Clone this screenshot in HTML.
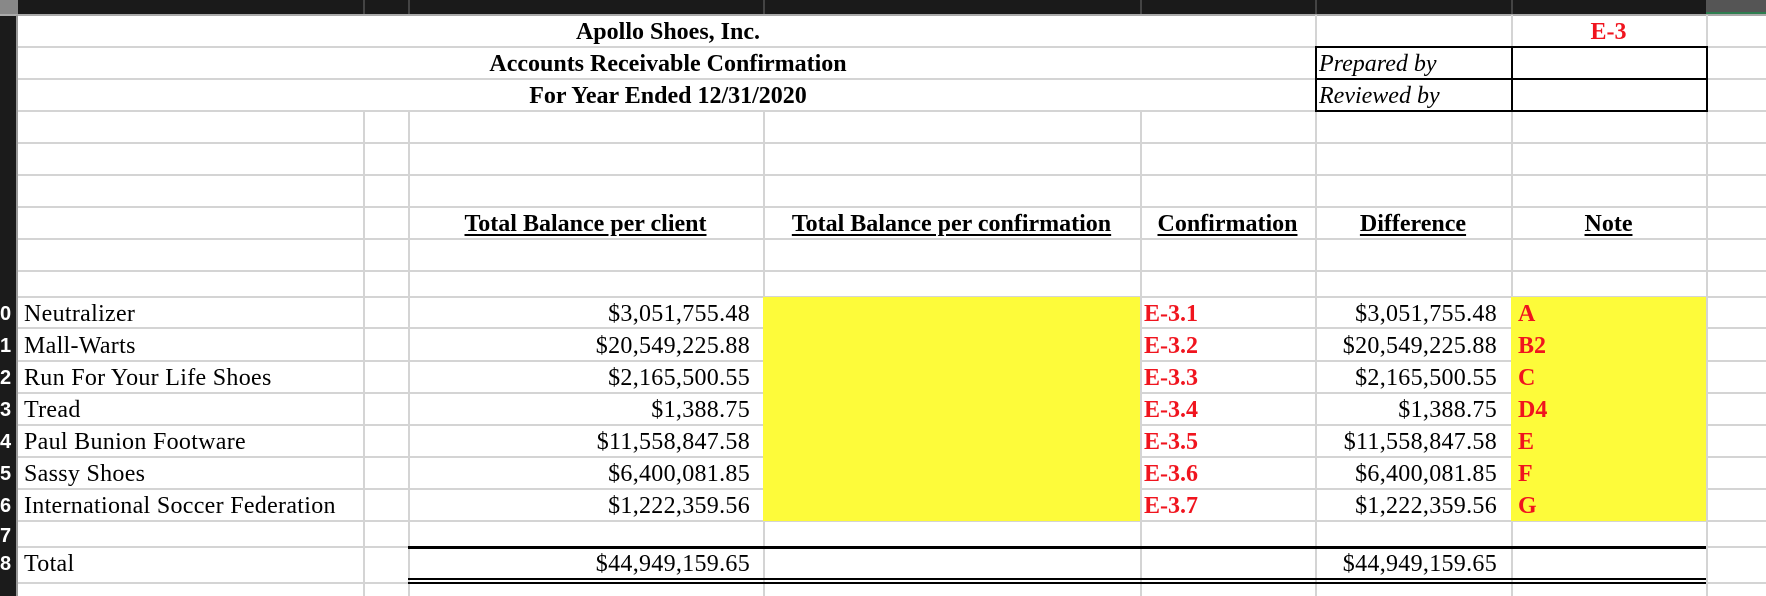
<!DOCTYPE html>
<html><head><meta charset="utf-8"><style>
body{margin:0;width:1766px;height:596px;overflow:hidden;background:#fff;position:relative;font-family:"Liberation Serif",serif;font-size:24px;color:#000;letter-spacing:0.3px}
div{position:absolute;box-sizing:border-box}
.h{height:2px;background:#d4d4d4;left:18px;right:0}
.v{width:2px;background:#d4d4d4}
.t{height:32px;line-height:35px;white-space:nowrap}
.b{font-weight:bold;letter-spacing:0}
.u{text-decoration:underline;text-decoration-thickness:2px;text-underline-offset:3px}
.r{color:#f0141e;font-weight:bold;letter-spacing:0}
.y{background:#fdfb3a}
.rn{left:0;width:18px;color:#fff;font-family:"Liberation Sans",sans-serif;font-weight:bold;font-size:20px;text-align:right;overflow:hidden;padding-right:9px;letter-spacing:0}
</style></head><body>
<div style="left:0;top:0;width:1766px;height:15px;background:#1a1a1a"></div>
<div style="left:1706px;top:0;width:60px;height:15px;background:#555"></div>
<div style="left:1706px;top:12px;width:60px;height:3px;background:#2e7d4f"></div>
<div style="left:0;top:0;width:18px;height:15px;background:#888"></div>
<div style="left:0;top:15px;width:18px;height:581px;background:#1b1b1b"></div>
<div style="left:363px;top:0;width:2px;height:15px;background:#444"></div>
<div style="left:408px;top:0;width:2px;height:15px;background:#444"></div>
<div style="left:763px;top:0;width:2px;height:15px;background:#444"></div>
<div style="left:1140px;top:0;width:2px;height:15px;background:#444"></div>
<div style="left:1315px;top:0;width:2px;height:15px;background:#444"></div>
<div style="left:1511px;top:0;width:2px;height:15px;background:#444"></div>
<div style="left:0;top:14px;width:1766px;height:2px;background:#aaa"></div>
<div class="h" style="top:46px"></div><div class="h" style="top:78px"></div><div class="h" style="top:110px"></div>
<div class="h" style="top:142px"></div><div class="h" style="top:174px"></div><div class="h" style="top:206px"></div>
<div class="h" style="top:238px"></div><div class="h" style="top:270px"></div><div class="h" style="top:296px"></div>
<div class="h" style="top:327px"></div><div class="h" style="top:360px"></div><div class="h" style="top:392px"></div>
<div class="h" style="top:424px"></div><div class="h" style="top:456px"></div><div class="h" style="top:488px"></div>
<div class="h" style="top:520px"></div><div class="h" style="top:546px"></div><div class="h" style="top:582px"></div>
<div class="v" style="left:363px;top:111px;height:485px"></div>
<div class="v" style="left:408px;top:111px;height:485px"></div>
<div class="v" style="left:763px;top:111px;height:485px"></div>
<div class="v" style="left:1140px;top:111px;height:485px"></div>
<div class="v" style="left:1315px;top:15px;height:581px"></div>
<div class="v" style="left:1511px;top:15px;height:581px"></div>
<div class="v" style="left:1706px;top:15px;height:581px"></div>
<div class="y" style="left:763px;top:297px;width:377px;height:224px"></div>
<div class="y" style="left:1511px;top:297px;width:195px;height:224px"></div>
<div class="t b" style="left:368px;width:600px;top:15px;text-align:center">Apollo Shoes, Inc.</div>
<div class="t b" style="left:368px;width:600px;top:47px;text-align:center">Accounts Receivable Confirmation</div>
<div class="t b" style="left:368px;width:600px;top:79px;text-align:center">For Year Ended 12/31/2020</div>
<div class="t r" style="left:1511px;width:195px;top:15px;text-align:center">E-3</div>
<div style="left:1315px;top:46px;width:393px;height:66px;border:2px solid #000;background:#fff"></div>
<div style="left:1511px;top:46px;width:2px;height:66px;background:#000"></div>
<div style="left:1315px;top:78px;width:393px;height:2px;background:#000"></div>
<div class="t" style="left:1319px;top:47px;font-style:italic;letter-spacing:0">Prepared by</div>
<div class="t" style="left:1319px;top:79px;font-style:italic;letter-spacing:0">Reviewed by</div>
<div class="t b" style="left:408px;width:355px;top:207px;text-align:center"><span class="u">Total Balance per client</span></div>
<div class="t b" style="left:763px;width:377px;top:207px;text-align:center"><span class="u">Total Balance per confirmation</span></div>
<div class="t b" style="left:1140px;width:175px;top:207px;text-align:center"><span class="u">Confirmation</span></div>
<div class="t b" style="left:1315px;width:196px;top:207px;text-align:center"><span class="u">Difference</span></div>
<div class="t b" style="left:1511px;width:195px;top:207px;text-align:center"><span class="u">Note</span></div>
<div class="t" style="left:24px;top:297px">Neutralizer</div>
<div class="t" style="left:24px;top:329px">Mall-Warts</div>
<div class="t" style="left:24px;top:361px">Run For Your Life Shoes</div>
<div class="t" style="left:24px;top:393px">Tread</div>
<div class="t" style="left:24px;top:425px">Paul Bunion Footware</div>
<div class="t" style="left:24px;top:457px">Sassy Shoes</div>
<div class="t" style="left:24px;top:489px">International Soccer Federation</div>
<div class="t" style="left:24px;top:547px">Total</div>
<div class="t" style="right:1016px;top:297px">$3,051,755.48</div>
<div class="t" style="right:1016px;top:329px">$20,549,225.88</div>
<div class="t" style="right:1016px;top:361px">$2,165,500.55</div>
<div class="t" style="right:1016px;top:393px">$1,388.75</div>
<div class="t" style="right:1016px;top:425px">$11,558,847.58</div>
<div class="t" style="right:1016px;top:457px">$6,400,081.85</div>
<div class="t" style="right:1016px;top:489px">$1,222,359.56</div>
<div class="t" style="right:1016px;top:547px">$44,949,159.65</div>
<div class="t r" style="left:1144px;top:297px">E-3.1</div>
<div class="t r" style="left:1144px;top:329px">E-3.2</div>
<div class="t r" style="left:1144px;top:361px">E-3.3</div>
<div class="t r" style="left:1144px;top:393px">E-3.4</div>
<div class="t r" style="left:1144px;top:425px">E-3.5</div>
<div class="t r" style="left:1144px;top:457px">E-3.6</div>
<div class="t r" style="left:1144px;top:489px">E-3.7</div>
<div class="t" style="right:269px;top:297px">$3,051,755.48</div>
<div class="t" style="right:269px;top:329px">$20,549,225.88</div>
<div class="t" style="right:269px;top:361px">$2,165,500.55</div>
<div class="t" style="right:269px;top:393px">$1,388.75</div>
<div class="t" style="right:269px;top:425px">$11,558,847.58</div>
<div class="t" style="right:269px;top:457px">$6,400,081.85</div>
<div class="t" style="right:269px;top:489px">$1,222,359.56</div>
<div class="t" style="right:269px;top:547px">$44,949,159.65</div>
<div class="t r" style="left:1518px;top:297px">A</div>
<div class="t r" style="left:1518px;top:329px">B2</div>
<div class="t r" style="left:1518px;top:361px">C</div>
<div class="t r" style="left:1518px;top:393px">D4</div>
<div class="t r" style="left:1518px;top:425px">E</div>
<div class="t r" style="left:1518px;top:457px">F</div>
<div class="t r" style="left:1518px;top:489px">G</div>
<div style="left:408px;top:546px;width:1298px;height:3px;background:#000"></div>
<div style="left:408px;top:578px;width:1298px;height:2px;background:#000"></div>
<div style="left:408px;top:582px;width:1298px;height:2px;background:#000"></div>
<div class="t rn" style="top:297px">0</div>
<div class="t rn" style="top:329px">1</div>
<div class="t rn" style="top:361px">2</div>
<div class="t rn" style="top:393px">3</div>
<div class="t rn" style="top:425px">4</div>
<div class="t rn" style="top:457px">5</div>
<div class="t rn" style="top:489px">6</div>
<div class="t rn" style="top:519px">7</div>
<div class="t rn" style="top:547px">8</div>
<div style="left:16px;top:15px;width:2px;height:581px;background:#999"></div>
</body></html>
